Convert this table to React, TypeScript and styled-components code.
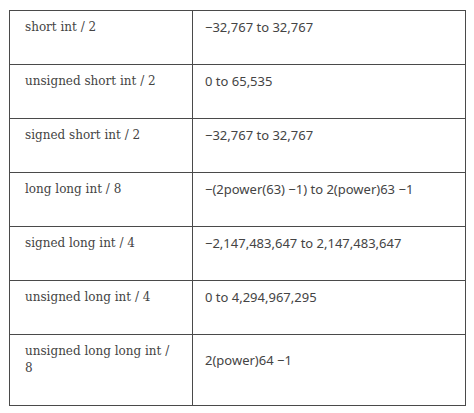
import React from "react";
import styled, { createGlobalStyle } from "styled-components";

const GlobalStyle = createGlobalStyle`
  body {
    margin: 0;
    background: #ffffff;
  }
`;

const rows = [
  { type: "short int / 2", range: "−32,767 to 32,767" },
  { type: "unsigned short int / 2", range: "0 to 65,535" },
  { type: "signed short int / 2", range: "−32,767 to 32,767" },
  { type: "long long int / 8", range: "−(2power(63) −1) to 2(power)63 −1" },
  { type: "signed long int / 4", range: "−2,147,483,647 to 2,147,483,647" },
  { type: "unsigned long int / 4", range: "0 to 4,294,967,295" },
  { type: "unsigned long long int / 8", range: "2(power)64 −1" },
];

const Page = styled.div`
  padding: 10px 8px 0 9px;
`;

const Table = styled.table`
  width: 457px;
  border-collapse: collapse;
  table-layout: fixed;
  color: #444;
`;

const Cell = styled.td<{ $sans?: boolean }>`
  border: 1.5px solid #4a4a4a;
  padding: 8px 12px 28px ${(p) => (p.$sans ? "12px" : "15px")};
  vertical-align: middle;
  font-family: ${(p) =>
    p.$sans ? '"Noto Sans", "DejaVu Sans", sans-serif' : '"DejaVu Serif", "Liberation Serif", serif'};
  font-size: ${(p) => (p.$sans ? "13px" : "12px")};
  line-height: 17px;
`;

export default function App() {
  return (
    <>
      <GlobalStyle />
      <Page>
        <Table>
          <colgroup>
            <col style={{ width: 183 }} />
            <col />
          </colgroup>
          <tbody>
            {rows.map((r) => (
              <tr key={r.type}>
                <Cell>{r.type}</Cell>
                <Cell $sans>{r.range}</Cell>
              </tr>
            ))}
          </tbody>
        </Table>
      </Page>
    </>
  );
}
